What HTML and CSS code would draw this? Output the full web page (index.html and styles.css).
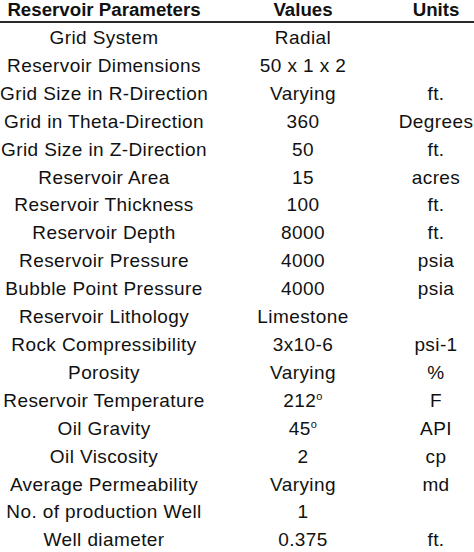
FILE: index.html
```html
<!DOCTYPE html>
<html>
<head>
<meta charset="utf-8">
<link rel="stylesheet" href="styles.css">
</head>
<body>
<div class="table">
  <div class="row head">
    <div class="c1">Reservoir Parameters</div>
    <div class="c2">Values</div>
    <div class="c3">Units</div>
  </div>
  <div class="body">
    <div class="row"><div class="c1">Grid System</div><div class="c2">Radial</div><div class="c3"></div></div>
    <div class="row"><div class="c1">Reservoir Dimensions</div><div class="c2">50 x 1 x 2</div><div class="c3"></div></div>
    <div class="row"><div class="c1">Grid Size in R-Direction</div><div class="c2">Varying</div><div class="c3">ft.</div></div>
    <div class="row"><div class="c1">Grid in Theta-Direction</div><div class="c2">360</div><div class="c3">Degrees</div></div>
    <div class="row"><div class="c1">Grid Size in Z-Direction</div><div class="c2">50</div><div class="c3">ft.</div></div>
    <div class="row"><div class="c1">Reservoir Area</div><div class="c2">15</div><div class="c3">acres</div></div>
    <div class="row"><div class="c1">Reservoir Thickness</div><div class="c2">100</div><div class="c3">ft.</div></div>
    <div class="row"><div class="c1">Reservoir Depth</div><div class="c2">8000</div><div class="c3">ft.</div></div>
    <div class="row"><div class="c1">Reservoir Pressure</div><div class="c2">4000</div><div class="c3">psia</div></div>
    <div class="row"><div class="c1">Bubble Point Pressure</div><div class="c2">4000</div><div class="c3">psia</div></div>
    <div class="row"><div class="c1">Reservoir Lithology</div><div class="c2">Limestone</div><div class="c3"></div></div>
    <div class="row"><div class="c1">Rock Compressibility</div><div class="c2">3x10-6</div><div class="c3">psi-1</div></div>
    <div class="row"><div class="c1">Porosity</div><div class="c2">Varying</div><div class="c3">%</div></div>
    <div class="row"><div class="c1">Reservoir Temperature</div><div class="c2">212<sup class="deg">o</sup></div><div class="c3">F</div></div>
    <div class="row"><div class="c1">Oil Gravity</div><div class="c2">45<sup class="deg">o</sup></div><div class="c3">API</div></div>
    <div class="row"><div class="c1">Oil Viscosity</div><div class="c2">2</div><div class="c3">cp</div></div>
    <div class="row"><div class="c1">Average Permeability</div><div class="c2">Varying</div><div class="c3">md</div></div>
    <div class="row"><div class="c1">No. of production Well</div><div class="c2">1</div><div class="c3"></div></div>
    <div class="row"><div class="c1">Well diameter</div><div class="c2">0.375</div><div class="c3">ft.</div></div>
  </div>
</div>
</body>
</html>
```
FILE: styles.css
```css
html, body {
  margin: 0;
  padding: 0;
  background: #fff;
}
body {
  font-family: "Liberation Sans", Arial, sans-serif;
  font-size: 19px;
  letter-spacing: 0.4px;
  color: #111;
  width: 474px;
  overflow: hidden;
}
.table {
  display: flex;
  flex-direction: column;
}
.row {
  display: grid;
  grid-template-columns: 208px 190px 76px;
  line-height: 27.9px;
  white-space: nowrap;
}
.row > div {
  text-align: center;
}
.head {
  font-weight: bold;
  font-size: 18.7px;
  letter-spacing: 0;
  line-height: 20px;
  padding-bottom: 1px;
  border-bottom: 2px solid #2a2a2a;
  margin-bottom: 1px;
}
.body {
  display: flex;
  flex-direction: column;
}
.deg {
  font-size: 11px;
  line-height: 0;
  vertical-align: 7px;
}
```
